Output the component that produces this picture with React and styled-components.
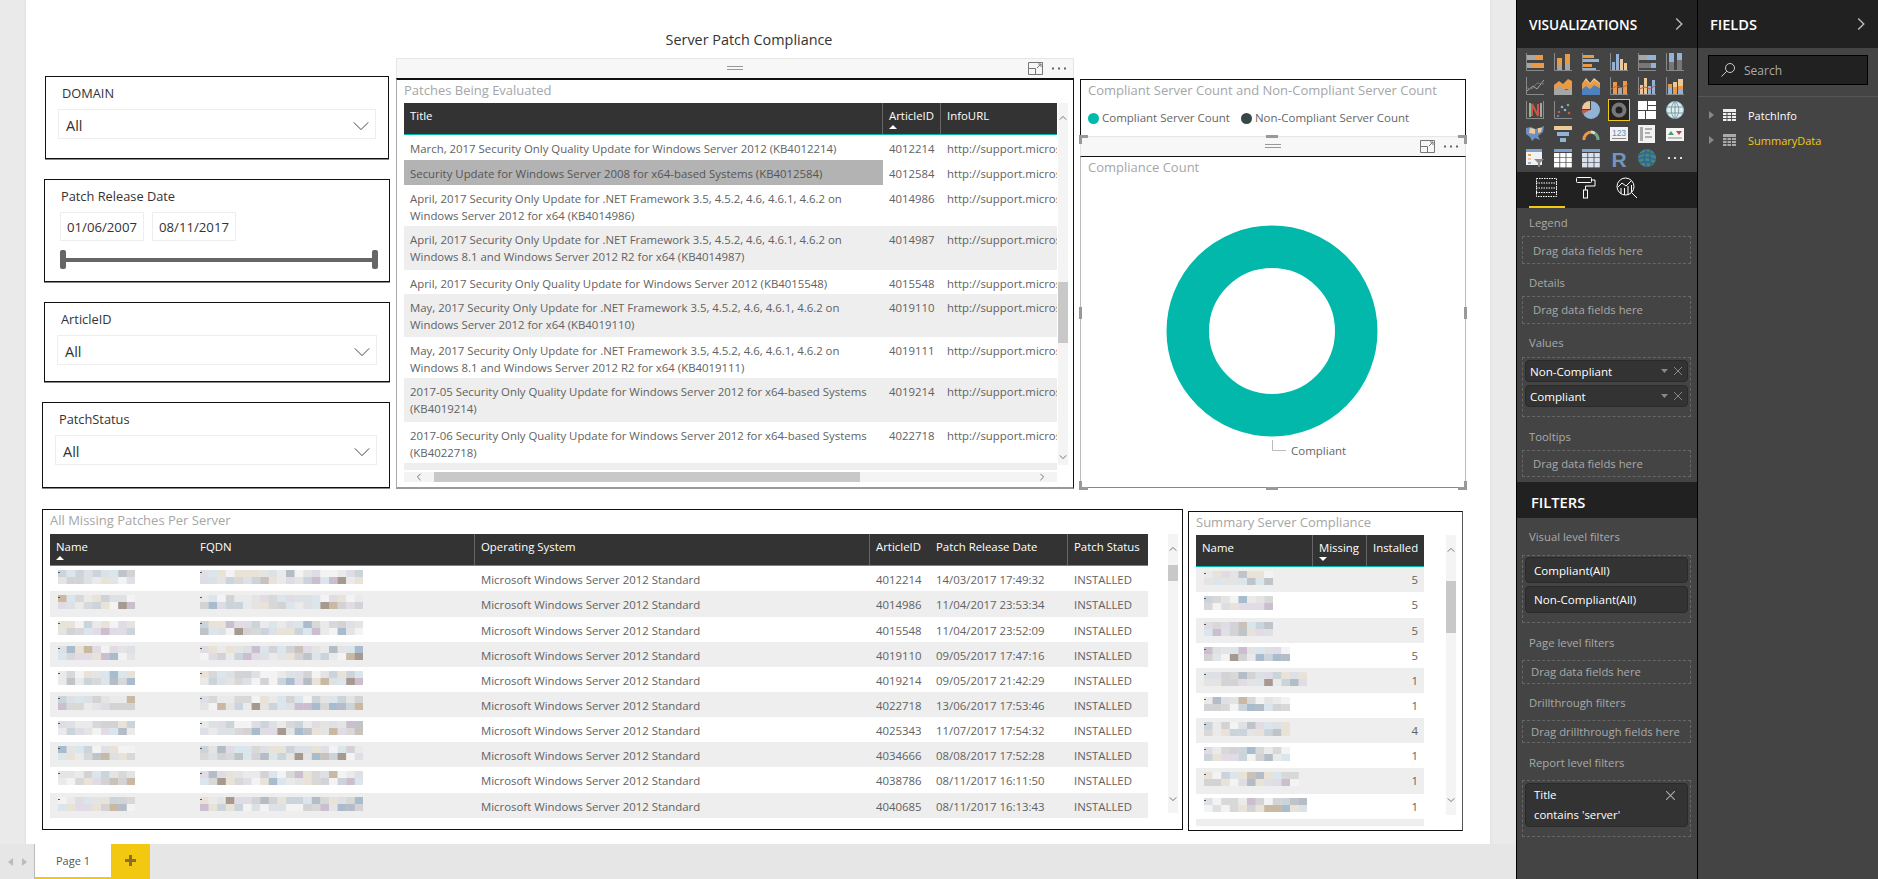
import React from "react";
import styled, { createGlobalStyle } from "styled-components";

const Global = createGlobalStyle`
  html, body { margin: 0; padding: 0; width: 1878px; height: 879px; overflow: hidden; background: #eaeaea; }
  body { font-family: "Open Sans", "Noto Sans", sans-serif; color: #333; }
  * { box-sizing: border-box; }
`;

const YELLOW = "#F2C811";
const TEAL = "#01B8AA";

/* ---------- shell ---------- */
const App_ = styled.div`display: flex; width: 1878px; height: 879px; overflow: hidden;`;
const Workspace = styled.div`width: 1516px; display: flex; flex-direction: column; background: #eaeaea;`;
const Stage = styled.div`height: 844px; padding: 0 26px;`;
const Canvas = styled.div`height: 844px; background: #fff; box-shadow: 0 0 3px rgba(0,0,0,.08);`;
const ReportTitle = styled.div`
  height: 58px; padding: 30px 18px 0 0; text-align: center; font-size: 14.4px; line-height: 20px; color: #333;
`;
const TopRow = styled.div`display: flex; height: 431px; padding-left: 16px;`;
const BottomRow = styled.div`display: flex; margin-top: 20px; padding-left: 16px;`;
const LeftCol = styled.div`width: 348px; display: flex; flex-direction: column; gap: 20px; padding-top: 18px; align-items: flex-end;`;

/* ---------- slicers ---------- */
const Slicer = styled.section`
  height: ${p => p.$h}px; width: ${p => p.$w}px; margin-right: ${p => p.$mr || 0}px;
  border: 1px solid #111; box-shadow: 0 1px 0 #888; padding: 6px 12px 0 12px; flex: none;
`;
const SlicerLabel = styled.div`font-size: 12.8px; line-height: 20px; color: #333; padding-left: 4px;`;
const Dropdown = styled.div`
  margin-top: 6px; height: 30px; border: 1px solid #eee; display: flex; align-items: center;
  justify-content: space-between; padding: 3px 5px 0 7px; font-size: 14.5px; color: #333;
`;
const Dates = styled.div`display: flex; gap: 8px; margin: 6px 0 0 3px;`;
const DateBox = styled.div`
  width: 84px; height: 29px; border: 1px solid #eee; text-align: center; line-height: 29px; font-size: 13.2px; color: #333;
`;
const Slider = styled.div`
  margin: 9px 0 0 3px; width: 318px; height: 19px; display: flex; align-items: center; justify-content: space-between;
  background: linear-gradient(#666, #666) center / 100% 4px no-repeat;
`;
const SliderKnob = styled.span`width: 6px; height: 19px; background: #666; border-radius: 2px;`;

/* ---------- visual frames ---------- */
const CenterVisual = styled.section`width: 678px; margin-left: 6px; display: flex; flex-direction: column;`;
const RightCol = styled.div`width: 386px; margin-left: 6px; padding-top: 21px; display: flex; flex-direction: column;`;
const Strip = styled.div`
  height: 20px; flex: none; background: #f7f7f7; border: 1px solid #e6e6e6; border-bottom: 0;
  display: grid; grid-template-columns: 1fr auto 1fr; align-items: center; padding: 0 6px;
`;
const StripTools = styled.div`display: flex; justify-content: flex-end; align-items: center; gap: 9px;`;
const CenterBody = styled.div`
  height: 411px; border-top: 2px solid #111; border-right: 1px solid #111; border-left: 1px solid #aaa; border-bottom: 2px solid #999;
  padding: 0 0 0 7px;
`;
const VisualTitle = styled.div`
  height: ${p => p.$h || 23}px; font-size: 13px; line-height: 20px; color: #a6a6a6; white-space: nowrap;
`;
const TableWithScroll = styled.div`display: flex; gap: ${p => p.$gap || 0}px; align-items: flex-start;`;
const TableCol = styled.div`width: ${p => p.$w}px; flex: none; display: flex; flex-direction: column;`;
const LegendCard = styled.section`
  height: 57px; flex: none; border: 1px solid #111; border-bottom: 0; padding: 0 7px;
`;
const Legend = styled.div`display: flex; align-items: center; margin-top: 9px; font-size: 11.5px; color: #666; line-height: 18px;`;
const LegendDot = styled.span`width: 11px; height: 11px; border-radius: 50%; background: ${p => p.$c}; margin-right: 3px; flex: none;`;
const LegendText = styled.span`margin-right: ${p => p.$mr || 0}px;`;
const DonutVisual = styled.section`position: relative; flex: 1; display: flex; flex-direction: column;`;
const DonutBody = styled.div`
  height: 332px; border-top: 1px solid #111; border-left: 1px solid #bbb; border-right: 1px solid #bbb; border-bottom: 1px solid #888;
  padding: 0 0 0 7px;
`;
const DonutChart = styled.svg`display: block;`;
const Handle = styled.span`
  position: absolute; background: #999;
  ${p => p.$css}
`;

/* ---------- tables ---------- */
const HeadRow = styled.div`
  display: grid; grid-template-columns: ${p => p.$cols}; height: ${p => p.$h || 32}px; background: #333;
  border-bottom: 1px solid ${TEAL}; color: #fff; font-size: 11.4px; line-height: 17px;
`;
const HeadCell = styled.div`
  padding: 4px 5px 0 6px; border-right: 1px solid ${p => (p.$line ? "#666" : "transparent")}; white-space: nowrap; overflow: hidden;
`;
const SortArrow = styled.span`
  display: block; width: 0; height: 0; margin: 1px 0 0 0; border-left: 4px solid transparent; border-right: 4px solid transparent;
  ${p => (p.$down ? "border-top: 4px solid #fff;" : "border-bottom: 4px solid #fff;")}
`;
const Row = styled.div`
  display: grid; grid-template-columns: ${p => p.$cols}; height: ${p => p.$h}px;
  background: ${p => (p.$alt ? "#eeeeee" : "#fff")}; font-size: 11.4px; line-height: 17px; color: #626262;
`;
const Cell = styled.div`
  padding: var(--cell-top, 5px) 6px 0; white-space: nowrap; overflow: hidden;
  text-align: ${p => (p.$right ? "right" : "left")};
  ${p => p.$sel && "background: #b3b3b3; color: #555;"}
`;
const Line = styled.span`display: block;`;
const Tail = styled.div`height: 7px; background: #eeeeee;`;
const MosaicCell = styled.div`padding: 4px 0 0 8px; overflow: hidden;`;
const MosaicFqdn = styled.div`padding: 4px 0 0 6px; overflow: hidden;`;
const MosaicArt = styled.svg`display: block;`;

const BottomLeft = styled.section`
  width: 1141px; height: 321px; border: 1px solid #111; padding: 0 0 0 7px; flex: none;
`;
const BottomRight = styled.section`
  width: 275px; height: 320px; margin: 2px 0 0 5px; border: 1px solid #111; border-right-color: #555; padding: 0 0 0 7px; flex: none;
  --cell-top: 4px;
`;

const Track = styled.div`
  width: 10px; height: ${p => p.$h}px; flex: none; background: #f4f4f4; display: flex; flex-direction: column;
`;
const ChevBox = styled.div`height: ${p => p.$h}px; flex: none; display: flex; align-items: center; justify-content: center;`;
const Spacer = styled.div`height: ${p => p.$h}px; flex: ${p => (p.$h === undefined ? 1 : "none")};`;
const Thumb = styled.div`height: ${p => p.$h}px; flex: none; background: #c8c8c8;`;
const HTrack = styled.div`margin-top: 2px; height: 10px; background: #f4f4f4; display: flex; align-items: center;`;
const HChev = styled.div`width: 30px; height: 10px; flex: none; display: flex; align-items: center; justify-content: center;`;
const HThumb = styled.div`width: 426px; height: 10px; background: #c8c8c8; flex: none;`;
const HFill = styled.div`flex: 1;`;

/* ---------- page bar ---------- */
const PageBar = styled.div`height: 35px; display: flex; background: #e6e6e6; align-items: stretch;`;
const PageNav = styled.div`width: 35px; display: flex; align-items: center; justify-content: space-around; padding: 0 3px; border-right: 1px solid #bbb;`;
const PageTab = styled.div`
  width: 76px; background: #fff; border-bottom: 2px solid ${YELLOW}; font-size: 11px; color: #555;
  display: flex; align-items: center; justify-content: center;
`;
const PageAdd = styled.div`width: 39px; background: ${YELLOW}; display: flex; align-items: center; justify-content: center; padding-bottom: 3px;`;

/* ---------- panes ---------- */
const VizPane = styled.aside`
  width: 182px; height: 879px; background: #444; border-left: 1px solid #000; border-right: 1px solid #000;
  display: flex; flex-direction: column; flex: none;
`;
const FieldsPane = styled.aside`width: 180px; height: 879px; background: #444; flex: none;`;
const PaneHead = styled.header`
  height: 48px; background: #212121; display: flex; align-items: center; justify-content: space-between;
  padding: 0 ${p => p.$pr}px 0 ${p => p.$pl}px; color: #fff; font-size: ${p => p.$fs}px; font-weight: 600;
`;
const VizGrid = styled.div`
  height: 124px; padding: 2px 0 0 4px; display: grid; grid-template-columns: repeat(6, 28px); grid-auto-rows: 24px;
`;
const VizTile = styled.div`
  display: flex; align-items: center; justify-content: center; position: relative;
`;
const VizSelected = styled.div`
  width: 22px; height: 22px; border: 1.5px solid ${YELLOW}; background: #222; display: flex; align-items: center; justify-content: center;
`;
const TabIcons = styled.div`height: 36px; background: #212121; display: flex; align-items: flex-start; padding-left: 12px; flex: none;`;
const TabIcon = styled.div`
  width: 36px; height: 36px; display: flex; align-items: center; justify-content: center; margin-right: ${p => p.$mr || 0}px;
  border-bottom: 2px solid ${p => (p.$on ? YELLOW : "transparent")}; padding-bottom: 2px;
`;
const WellLabel = styled.div`
  margin: ${p => p.$top}px 0 0 12px; height: 18px; line-height: 18px; font-size: 11.3px; color: #aaa;
`;
const Well = styled.div`
  margin: ${p => p.$top}px 6px 0 5px; height: ${p => p.$h}px; border: 1px dashed #666; padding: ${p => p.$pad || 0}px ${p => (p.$pad ? 2 : 0)}px 0;
  display: flex; flex-direction: column; gap: 3px;
`;
const WellHint = styled.div`
  font-size: 11.3px; color: #aaa; padding-left: ${p => p.$pl || 10}px; line-height: ${p => p.$h}px; white-space: nowrap;
`;
const Chip = styled.div`
  height: ${p => p.$h}px; flex: none; background: #333; border-radius: 4px; border: 1px solid #2a2a2a; color: #fff; font-size: 11.6px;
  display: flex; align-items: center; justify-content: space-between; padding: 0 5px 0 4px;
`;
const FilterChip = styled(Chip)`padding: 0 7px 0 8px;`;
const ChipTools = styled.span`display: flex; align-items: center; gap: 6px;`;
const ReportChip = styled.div`
  height: 44px; background: #333; border-radius: 4px; border: 1px solid #2a2a2a; color: #fff; font-size: 11.4px; line-height: 20px;
  padding: 1px 12px 0 8px;
`;
const ReportChipTop = styled.div`display: flex; justify-content: space-between; align-items: center;`;
const FiltersBand = styled.div`
  margin-top: 5px; height: 36px; background: #212121; color: #fff; font-size: 14.7px; font-weight: 600; line-height: 36px; padding: 2px 0 0 14px; flex: none;
`;
const SearchWrap = styled.div`height: 49px; padding: 7px 10px 0; border-bottom: 1px solid #555;`;
const SearchBox = styled.div`
  height: 30px; background: #212121; border: 1px solid #000; display: flex; align-items: center; padding-left: 11px; gap: 8px;
  font-size: 12px; color: #aaa;
`;
const Tree = styled.div`padding: 0 0 0 11px;`;
const TreeRow = styled.div`
  height: 24px; margin-top: ${p => p.$top || 0}px; display: flex; align-items: center; gap: 9px;
  font-size: 11px; color: ${p => (p.$on ? YELLOW : "#fff")};
`;
const TreeName = styled.span`margin-left: 3px;`;

/* ---------- small drawings ---------- */
const Chev = ({ dir = "down", size = 8, color = "#555", w = 1 }) => {
  const pts = { down: "1,3 5,7 9,3", up: "1,7 5,3 9,7", left: "7,1 3,5 7,9", right: "3,1 7,5 3,9" }[dir];
  return (
    <svg width={size} height={size} viewBox="0 0 10 10">
      <polyline points={pts} fill="none" stroke={color} strokeWidth={w} />
    </svg>
  );
};
const Burger = () => (
  <svg width="16" height="5" viewBox="0 0 16 5"><path d="M0 .5H16M0 3.5H16" stroke="#999" /></svg>
);
const Focus = () => (
  <svg width="15" height="13" viewBox="0 0 15 13" fill="none" stroke="#777">
    <path d="M.5 6.5V.5H14.5V12.5H.5V6.5H7.5V12.5M9 6L13 2M10 2H13V5" />
  </svg>
);
const Dots = () => (
  <svg width="15" height="3" viewBox="0 0 15 3" fill="#666"><rect y=".5" width="2" height="2" /><rect x="6" y=".5" width="2" height="2" /><rect x="12" y=".5" width="2" height="2" /></svg>
);
const XMark = ({ size = 8, c = "#888" }) => (
  <svg width={size} height={size} viewBox="0 0 8 8"><path d="M0 0L8 8M8 0L0 8" stroke={c} /></svg>
);
const Caret = () => <svg width="7" height="4" viewBox="0 0 7 4"><path d="M0 0H7L3.5 4Z" fill="#888" /></svg>;
const TableGlyph = ({ c }) => (
  <svg width="13" height="12" viewBox="0 0 13 12">
    <rect width="13" height="12" fill={c} />
    <path d="M0 3.5H13M0 6.5H13M0 9.5H13M4 3V12M8.5 3V12" stroke="#444" strokeWidth=".9" />
  </svg>
);
const SearchGlyph = () => (
  <svg width="16" height="16" viewBox="0 0 16 16" fill="none" stroke="#ccc"><circle cx="10" cy="6" r="4.5" /><path d="M6.7 9.3L1.5 14.5" /></svg>
);

const O = "#EB9A44", B = "#93B3D6", T = "#EDC998", G = "#A6A6A6", A = "#8a8a8a", R = "#C9584A";
const axis = <path d="M.5 0V17.5H18" stroke={A} fill="none" />;
const rects = list => list.map(([x, y, w, h, f], i) => <rect key={i} x={x} y={y} width={w} height={h} fill={f} />);
const gridIcon = (head, cell) => (
  <>
    <rect y="0" width="18" height="3" fill={head} />
    {[0, 1, 2].map(r => [0, 1, 2].map(c => <rect key={`${r}${c}`} x={c * 6.2} y={4 + r * 5} width="5.4" height="4.4" fill={cell} />))}
  </>
);
const ICONS = [
  <>{axis}{rects([[1, 2, 9, 5, G], [10, 2, 7, 5, O], [1, 10, 5, 5, G], [6, 10, 12, 5, O]])}</>,
  <>{axis}{rects([[3, 5, 5, 8, O], [3, 13, 5, 4, G], [11, 1, 5, 9, O], [11, 10, 5, 7, G]])}</>,
  <>{axis}{rects([[1, 2, 11, 3, O], [1, 6, 16, 3, B], [1, 11, 9, 3, O], [1, 15, 13, 2, B]])}</>,
  <>{axis}{rects([[2, 9, 3, 8, B], [6, 1, 3, 16, B], [10, 6, 3, 11, T], [14, 10, 3, 7, T]])}</>,
  <>{axis}{rects([[1, 2, 8, 5, G], [9, 2, 9, 5, B], [1, 10, 12, 5, "#777"], [13, 10, 5, 5, B]])}</>,
  <>{axis}{rects([[3, 0, 5, 9, B], [3, 9, 5, 8, "#777"], [11, 0, 5, 7, B], [11, 7, 5, 10, "#777"]])}</>,
  <>{axis}<path d="M1 14L7 9L11 12L18 3" stroke={G} fill="none" /><path d="M1 11L6 12L11 6L18 7" stroke="#777" fill="none" /></>,
  <><path d="M0 8L5 4L9 7L14 2L18 4V12H0Z" fill={O} /><path d="M0 12L6 9L12 13L18 11V18H0Z" fill={G} /></>,
  <><path d="M0 7L4 1L8 6L12 1L18 6V12H0Z" fill={T} /><path d="M0 7L4 3L8 7L12 3L18 7V11L12 8L8 12L4 9L0 12Z" fill={O} /><path d="M0 12L4 9L8 12L12 8L18 11V18H0Z" fill="#4F81BD" /></>,
  <>{axis}{rects([[3, 5, 4, 12, O], [8, 11, 4, 6, G], [13, 4, 4, 13, O]])}<path d="M1 12L7 9L12 11L18 7" stroke={R} fill="none" /></>,
  <>{axis}{rects([[2, 8, 3, 9, T], [6, 1, 3, 16, T], [10, 9, 3, 8, B], [14, 3, 3, 14, B]])}<path d="M1 12L7 10L12 12L18 8" stroke={R} fill="none" /></>,
  <>{axis}{rects([[2, 7, 4, 4, O], [2, 11, 4, 6, B], [7, 5, 4, 5, T], [7, 10, 4, 7, O], [12, 2, 5, 7, T], [12, 9, 5, 4, O], [12, 13, 5, 4, B]])}</>,
  <><path d="M.5 0V17.5H18M17.5 0V18" stroke={A} fill="none" />{rects([[3, 2, 2, 14, "#8FBC8F"], [14, 2, 2, 14, G]])}<path d="M6 15V3L12 15V3" stroke={R} strokeWidth="2" fill="none" /></>,
  <>{axis}<g><circle cx="5" cy="11" r="1.3" fill={R} /><circle cx="8" cy="6" r="1.3" fill={B} /><circle cx="11" cy="9" r="1.3" fill={B} /><circle cx="14" cy="4" r="1.3" fill="#7fae7f" /><circle cx="4" cy="15" r="1.3" fill="#4F81BD" /><circle cx="15" cy="12" r="1.3" fill={R} /></g></>,
  <><path d="M9 9V0A9 9 0 1 1 0 9Z" fill={B} /><path d="M8 8H0A8 8 0 0 1 8 0Z" fill={T} /><path d="M8 9L1 13A8 8 0 0 1 0 9Z" fill={R} /></>,
  null,
  <>{rects([[0, 0, 9, 9, "#fff"], [10, 0, 8, 4, "#fff"], [10, 5, 8, 4, "#fff"], [0, 10, 7, 8, "#fff"], [8, 10, 10, 8, "#fff"]])}</>,
  <><circle cx="9" cy="9" r="8.4" fill="#DDEEF2" stroke="#9fd3d8" /><path d="M0 6H18M0 12H18M9 0V18M9 0C4 5 4 13 9 18M9 0C14 5 14 13 9 18" stroke="#6b8793" fill="none" strokeWidth=".8" /></>,
  <><path d="M0 3L5 2L9 4L13 3L18 1L17 7L12 11L14 15L9 13L6 16L4 12L0 9Z" fill="#6E8FBF" /><path d="M4 3L9 4V9L3 8ZM12 3L16 3L15 7L12 8Z" fill={T} /></>,
  <>{rects([[0, 1, 18, 4, T], [3, 7, 12, 4, B], [6, 13, 6, 4, B]])}</>,
  <><path d="M2 15A7.5 7.5 0 0 1 9 7" stroke={O} strokeWidth="3" fill="none" /><path d="M9 7A7.5 7.5 0 0 1 13 8.5" stroke="#ddd" strokeWidth="3" fill="none" /><path d="M13 8.5A7.5 7.5 0 0 1 16 15" stroke="#6fa88a" strokeWidth="3" fill="none" /></>,
  <><rect y="2" width="18" height="14" fill="#f2f2f2" /><text x="9" y="11" textAnchor="middle" fontSize="8.5" fill="#6a88ac" fontFamily="Liberation Sans, sans-serif">123</text><path d="M2 13.5H16" stroke="#888" /></>,
  <><rect width="17" height="18" fill="#f2f2f2" /><rect x="2" y="2" width="3" height="14" fill="#aaa" /><path d="M7 4H14M7 8H12M7 12H14" stroke="#999" strokeWidth="1.4" /></>,
  <><rect y="3" width="18" height="13" fill="#f4f4f4" /><path d="M2 10L5 6L8 10Z" fill="#4d9b6e" /><path d="M10 6H16L13 10Z" fill="#C9453A" /><path d="M2 13H16" stroke="#888" /></>,
  <><rect width="16" height="16" fill="#f2f2f2" /><rect width="16" height="3" fill="#7BA3D0" /><rect x="2" y="5" width="3" height="2" fill={O} /><rect x="2" y="9" width="3" height="2" fill={T} /><rect x="2" y="13" width="3" height="2" fill={B} /><path d="M8 10H18L14 14V18H12V14Z" fill="#8a8a8a" /></>,
  <>{gridIcon("#7BA3D0", "#fff")}</>,
  <>{gridIcon("#7BA3D0", "#d9e2ee")}</>,
  <text x="9" y="17.5" textAnchor="middle" fontSize="21" fontWeight="700" fill="#7395BD" fontFamily="Liberation Sans, sans-serif">R</text>,
  <><circle cx="9" cy="9" r="9" fill="#3F8F6D" /><path d="M1 6C6 3 12 3 17 6M0 10C6 7 12 8 18 11M2 14C7 12 12 13 16 15M9 0C5 6 6 13 9 18M12 1C11 7 12 12 13 17" stroke="#3A5FA0" strokeWidth="1.6" fill="none" /></>,
  <g fill="#ddd"><rect x="2" y="8" width="2" height="2" /><rect x="8" y="8" width="2" height="2" /><rect x="14" y="8" width="2" height="2" /></g>,
];

const Mosaic = ({ seed, cols, cw = 8.6 }) => {
  const soft = ["#f3f3f3", "#eaeaea", "#e4e4e4", "#dde1e5", "#d8d8d8", "#e9e2d6", "#dbe5ec", "#e1dbe5", "#d3d3d6", "#ccd4db"];
  const hard = ["#c9c2bc", "#b4bcc6", "#a8998f", "#a9bccd", "#cbbfcf", "#c9b9a2", "#bfc4c9"];
  let s = seed * 9301 + 49297;
  const rnd = () => { s = (s * 9301 + 49297) % 233280; return s / 233280; };
  const cells = [];
  for (let r = 0; r < 2; r++)
    for (let c = 0; c < cols; c++) {
      const darkChance = c > cols * 0.55 && r === 1 ? 0.35 : 0.1;
      const pick = rnd() < darkChance ? hard[Math.floor(rnd() * hard.length)] : soft[Math.floor(rnd() * soft.length)];
      cells.push(<rect key={`${r}-${c}`} x={c * cw} y={r * 7} width={cw + 0.3} height="7.3" fill={pick} />);
    }
  return (
    <MosaicArt width={cols * cw} height="14" viewBox={`0 0 ${cols * cw} 14`}>
      {cells}
      <rect x="0" y="2" width="2" height="1" fill="#555" />
    </MosaicArt>
  );
};

const ScrollBar = ({ h, topBox = 30, gap, thumb, downBox }) => (
  <Track $h={h}>
    <ChevBox $h={topBox}><Chev dir="up" color="#555" /></ChevBox>
    <Spacer $h={gap} />
    <Thumb $h={thumb} />
    <Spacer />
    <ChevBox $h={downBox}><Chev dir="down" color="#555" /></ChevBox>
  </Track>
);

const DropChev = () => <Chev size={18} w={0.55} color="#444" />;

/* ---------- data ---------- */
const PATCH_COLS = "479px 58px 116px";
const PATCHES = [
  [25, ["March, 2017 Security Only Quality Update for Windows Server 2012 (KB4012214)"], "4012214"],
  [25, ["Security Update for Windows Server 2008 for x64-based Systems (KB4012584)"], "4012584", "sel"],
  [41, ["April, 2017 Security Only Update for .NET Framework 3.5, 4.5.2, 4.6, 4.6.1, 4.6.2 on", "Windows Server 2012 for x64 (KB4014986)"], "4014986"],
  [44, ["April, 2017 Security Only Update for .NET Framework 3.5, 4.5.2, 4.6, 4.6.1, 4.6.2 on", "Windows 8.1 and Windows Server 2012 R2 for x64 (KB4014987)"], "4014987", "alt"],
  [24, ["April, 2017 Security Only Quality Update for Windows Server 2012 (KB4015548)"], "4015548"],
  [43, ["May, 2017 Security Only Update for .NET Framework 3.5, 4.5.2, 4.6, 4.6.1, 4.6.2 on", "Windows Server 2012 for x64 (KB4019110)"], "4019110", "alt"],
  [41, ["May, 2017 Security Only Update for .NET Framework 3.5, 4.5.2, 4.6, 4.6.1, 4.6.2 on", "Windows 8.1 and Windows Server 2012 R2 for x64 (KB4019111)"], "4019111"],
  [44, ["2017-05 Security Only Quality Update for Windows Server 2012 for x64-based Systems", "(KB4019214)"], "4019214", "alt"],
  [41, ["2017-06 Security Only Quality Update for Windows Server 2012 for x64-based Systems", "(KB4022718)"], "4022718"],
];
const MISS_COLS = "144px 281px 395px 60px 138px 80px";
const MISSING = [
  [25, "4012214", "14/03/2017 17:49:32"], [26, "4014986", "11/04/2017 23:53:34"], [25, "4015548", "11/04/2017 23:52:09"],
  [25, "4019110", "09/05/2017 17:47:16"], [25, "4019214", "09/05/2017 21:42:29"], [25, "4022718", "13/06/2017 17:53:46"],
  [25, "4025343", "11/07/2017 17:54:32"], [25, "4034666", "08/08/2017 17:52:28"], [26, "4038786", "08/11/2017 16:11:50"],
  [25, "4040685", "08/11/2017 16:13:43"],
];
const SUM_COLS = "117px 54px 57px";
const SUMMARY = [
  [25, 5, 8], [26, 5, 8], [25, 5, 8], [25, 5, 10], [25, 1, 12], [25, 1, 10], [25, 4, 10], [25, 1, 10], [26, 1, 11], [25, 1, 12],
];

const HANDLES = [
  "left:-1px;top:-1px;width:9px;height:3px;", "left:-1px;top:-1px;width:3px;height:9px;",
  "right:-1px;top:-1px;width:9px;height:3px;", "right:-1px;top:-1px;width:3px;height:9px;",
  "left:-1px;bottom:-1px;width:9px;height:3px;", "left:-1px;bottom:-1px;width:3px;height:9px;",
  "right:-1px;bottom:-1px;width:9px;height:3px;", "right:-1px;bottom:-1px;width:3px;height:9px;",
  "left:186px;top:-1px;width:12px;height:3px;", "left:186px;bottom:-1px;width:12px;height:3px;",
  "left:-1px;top:171px;width:3px;height:12px;", "right:-1px;top:171px;width:3px;height:12px;",
];

export default function App() {
  return (
    <App_>
      <Global />
      <Workspace>
        <Stage>
          <Canvas>
            <ReportTitle>Server Patch Compliance</ReportTitle>
            <TopRow>
              <LeftCol>
                <Slicer $h={83} $w={344} $mr={1}>
                  <SlicerLabel>DOMAIN</SlicerLabel>
                  <Dropdown>All<DropChev /></Dropdown>
                </Slicer>
                <Slicer $h={103} $w={346}>
                  <SlicerLabel>Patch Release Date</SlicerLabel>
                  <Dates><DateBox>01/06/2007</DateBox><DateBox>08/11/2017</DateBox></Dates>
                  <Slider><SliderKnob /><SliderKnob /></Slider>
                </Slicer>
                <Slicer $h={80} $w={346}>
                  <SlicerLabel>ArticleID</SlicerLabel>
                  <Dropdown>All<DropChev /></Dropdown>
                </Slicer>
                <Slicer $h={86} $w={348}>
                  <SlicerLabel>PatchStatus</SlicerLabel>
                  <Dropdown>All<DropChev /></Dropdown>
                </Slicer>
              </LeftCol>

              <CenterVisual>
                <Strip><span /><Burger /><StripTools><Focus /><Dots /></StripTools></Strip>
                <CenterBody>
                  <VisualTitle>Patches Being Evaluated</VisualTitle>
                  <TableWithScroll $gap={1}>
                    <TableCol $w={653}>
                      <HeadRow $cols={PATCH_COLS}>
                        <HeadCell $line>Title</HeadCell>
                        <HeadCell $line>ArticleID<SortArrow /></HeadCell>
                        <HeadCell>InfoURL</HeadCell>
                      </HeadRow>
                      {PATCHES.map(([h, lines, id, kind]) => (
                        <Row key={id} $cols={PATCH_COLS} $h={h} $alt={kind === "alt"}>
                          <Cell $sel={kind === "sel"}>{lines.map(l => <Line key={l}>{l}</Line>)}</Cell>
                          <Cell>{id}</Cell>
                          <Cell>http://support.microsoft.com</Cell>
                        </Row>
                      ))}
                      <Tail />
                      <HTrack>
                        <HChev><Chev dir="left" /></HChev>
                        <HThumb />
                        <HFill />
                        <HChev><Chev dir="right" /></HChev>
                      </HTrack>
                    </TableCol>
                    <ScrollBar h={362} gap={149} thumb={61} downBox={16} />
                  </TableWithScroll>
                </CenterBody>
              </CenterVisual>

              <RightCol>
                <LegendCard>
                  <VisualTitle $h={20}>Compliant Server Count and Non-Compliant Server Count</VisualTitle>
                  <Legend>
                    <LegendDot $c={TEAL} /><LegendText $mr={11}>Compliant Server Count</LegendText>
                    <LegendDot $c="#374649" /><LegendText>Non-Compliant Server Count</LegendText>
                  </Legend>
                </LegendCard>
                <DonutVisual>
                  {HANDLES.map(c => <Handle key={c} $css={c} />)}
                  <Strip><span /><Burger /><StripTools><Focus /><Dots /></StripTools></Strip>
                  <DonutBody>
                    <VisualTitle>Compliance Count</VisualTitle>
                    <DonutChart width="375" height="305" viewBox="0 0 375 305">
                      <circle cx="184" cy="151" r="84.25" fill="none" stroke={TEAL} strokeWidth="42.5" />
                      <path d="M184.5 260V270.5H198" stroke="#bbb" fill="none" />
                      <text x="203" y="275" fontSize="11.5" fill="#666" fontFamily="Open Sans, sans-serif">Compliant</text>
                    </DonutChart>
                  </DonutBody>
                </DonutVisual>
              </RightCol>
            </TopRow>

            <BottomRow>
              <BottomLeft>
                <VisualTitle $h={24}>All Missing Patches Per Server</VisualTitle>
                <TableWithScroll $gap={20}>
                  <TableCol $w={1098}>
                    <HeadRow $cols={MISS_COLS}>
                      <HeadCell>Name<SortArrow /></HeadCell>
                      <HeadCell $line>FQDN</HeadCell>
                      <HeadCell $line>Operating System</HeadCell>
                      <HeadCell>ArticleID</HeadCell>
                      <HeadCell $line>Patch Release Date</HeadCell>
                      <HeadCell>Patch Status</HeadCell>
                    </HeadRow>
                    {MISSING.map(([h, id, date], i) => (
                      <Row key={id} $cols={MISS_COLS} $h={h} $alt={i % 2 === 1}>
                        <MosaicCell><Mosaic seed={i + 3} cols={9} /></MosaicCell>
                        <MosaicFqdn><Mosaic seed={i + 40} cols={19} /></MosaicFqdn>
                        <Cell>Microsoft Windows Server 2012 Standard</Cell>
                        <Cell>{id}</Cell>
                        <Cell>{date}</Cell>
                        <Cell>INSTALLED</Cell>
                      </Row>
                    ))}
                  </TableCol>
                  <ScrollBar h={279} gap={1} thumb={16} downBox={28} />
                </TableWithScroll>
              </BottomLeft>

              <BottomRight>
                <VisualTitle>Summary Server Compliance</VisualTitle>
                <TableWithScroll $gap={22}>
                  <TableCol $w={228}>
                    <HeadRow $cols={SUM_COLS}>
                      <HeadCell $line>Name</HeadCell>
                      <HeadCell $line>Missing<SortArrow $down /></HeadCell>
                      <HeadCell>Installed</HeadCell>
                    </HeadRow>
                    {SUMMARY.map(([h, n, cols], i) => (
                      <Row key={i} $cols={SUM_COLS} $h={h} $alt={i % 2 === 0}>
                        <MosaicCell><Mosaic seed={i + 80} cols={cols} /></MosaicCell>
                        <Cell />
                        <Cell $right>{n}</Cell>
                      </Row>
                    ))}
                    <Tail />
                  </TableCol>
                  <ScrollBar h={280} gap={16} thumb={52} downBox={30} />
                </TableWithScroll>
              </BottomRight>
            </BottomRow>
          </Canvas>
        </Stage>
        <PageBar>
          <PageNav>
            <svg width="5" height="8" viewBox="0 0 5 8"><path d="M5 0V8L0 4Z" fill="#bbb" /></svg>
            <svg width="5" height="8" viewBox="0 0 5 8"><path d="M0 0V8L5 4Z" fill="#bbb" /></svg>
          </PageNav>
          <PageTab>Page 1</PageTab>
          <PageAdd>
            <svg width="11" height="11" viewBox="0 0 11 11"><path d="M5.5 0V11M0 5.5H11" stroke="#85702a" strokeWidth="3" /></svg>
          </PageAdd>
        </PageBar>
      </Workspace>

      <VizPane>
        <PaneHead $pl={12} $pr={11} $fs={13.6}>VISUALIZATIONS<Chev dir="right" size={14} color="#bbb" /></PaneHead>
        <VizGrid>
          {ICONS.map((icon, i) => (
            <VizTile key={i}>
              {icon ? (
                <svg width="18" height="18" viewBox="0 0 18 18" overflow="visible">{icon}</svg>
              ) : (
                <VizSelected>
                  <svg width="16" height="16" viewBox="0 0 16 16">
                    <circle cx="8" cy="8" r="5.5" fill="none" stroke="#777" strokeWidth="4" />
                  </svg>
                </VizSelected>
              )}
            </VizTile>
          ))}
        </VizGrid>
        <TabIcons>
          <TabIcon $on $mr={3}>
            <svg width="22" height="20" viewBox="0 0 22 20" fill="none" stroke="#fff" strokeDasharray="1.5 1"><rect x=".5" y=".5" width="20" height="18" /><path d="M0 5H21M0 10H21M0 14.5H21" /></svg>
          </TabIcon>
          <TabIcon $mr={5}>
            <svg width="20" height="22" viewBox="0 0 20 22" fill="none" stroke="#fff"><rect x=".5" y=".5" width="15" height="5" rx="1" /><path d="M15.5 3H19V9H9.5V13" /><rect x="7.5" y="13" width="4" height="8" /></svg>
          </TabIcon>
          <TabIcon>
            <svg width="22" height="22" viewBox="0 0 22 22" fill="none" stroke="#fff"><circle cx="9.5" cy="9.5" r="8.5" /><path d="M15.5 15.5L21 21M2 10L6 6L10 9L15 4M5 17V11M8.5 18V11M12 18V9M15.5 15V8" /></svg>
          </TabIcon>
        </TabIcons>

        <WellLabel $top={6}>Legend</WellLabel>
        <Well $top={4} $h={28}><WellHint $h={28}>Drag data fields here</WellHint></Well>
        <WellLabel $top={10}>Details</WellLabel>
        <Well $top={4} $h={28}><WellHint $h={26}>Drag data fields here</WellHint></Well>
        <WellLabel $top={10}>Values</WellLabel>
        <Well $top={5} $h={60} $pad={2}>
          <Chip $h={22}>Non-Compliant<ChipTools><Caret /><XMark /></ChipTools></Chip>
          <Chip $h={22}>Compliant<ChipTools><Caret /><XMark /></ChipTools></Chip>
        </Well>
        <WellLabel $top={11}>Tooltips</WellLabel>
        <Well $top={4} $h={27}><WellHint $h={26}>Drag data fields here</WellHint></Well>
        <FiltersBand>FILTERS</FiltersBand>
        <WellLabel $top={10}>Visual level filters</WellLabel>
        <Well $top={9} $h={68} $pad={1}>
          <FilterChip $h={26}>Compliant(All)</FilterChip>
          <FilterChip $h={27}>Non-Compliant(All)</FilterChip>
        </Well>
        <WellLabel $top={11}>Page level filters</WellLabel>
        <Well $top={8} $h={24}><WellHint $h={22} $pl={8}>Drag data fields here</WellHint></Well>
        <WellLabel $top={10}>Drillthrough filters</WellLabel>
        <Well $top={8} $h={23}><WellHint $h={21} $pl={8}>Drag drillthrough fields here</WellHint></Well>
        <WellLabel $top={11}>Report level filters</WellLabel>
        <Well $top={8} $h={57} $pad={2}>
          <ReportChip>
            <ReportChipTop>Title<XMark size={9} c="#aaa" /></ReportChipTop>
            contains 'server'
          </ReportChip>
        </Well>
      </VizPane>

      <FieldsPane>
        <PaneHead $pl={12} $pr={10} $fs={14.6}>FIELDS<Chev dir="right" size={14} color="#bbb" /></PaneHead>
        <SearchWrap>
          <SearchBox><SearchGlyph />Search</SearchBox>
        </SearchWrap>
        <Tree>
          <TreeRow $top={6}>
            <svg width="5" height="8" viewBox="0 0 5 8"><path d="M0 0V8L5 4Z" fill="#888" /></svg>
            <TableGlyph c="#eee" /><TreeName>PatchInfo</TreeName>
          </TreeRow>
          <TreeRow $top={1} $on>
            <svg width="5" height="8" viewBox="0 0 5 8"><path d="M0 0V8L5 4Z" fill="#888" /></svg>
            <TableGlyph c="#aaa" /><TreeName>SummaryData</TreeName>
          </TreeRow>
        </Tree>
      </FieldsPane>
    </App_>
  );
}
